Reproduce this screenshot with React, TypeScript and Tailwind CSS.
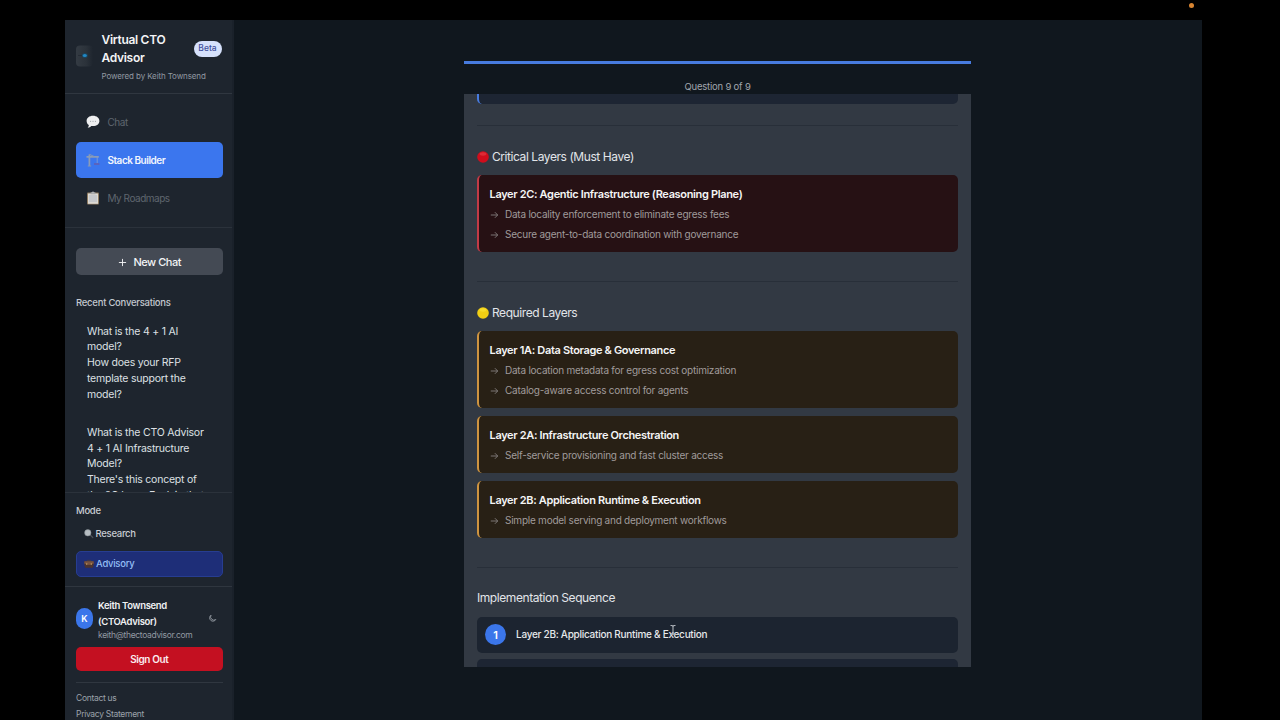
import { ReactNode } from "react";
import { Plus } from "lucide-react";

type Layer = {
  title: string;
  points: string[];
};

const criticalLayers: Layer[] = [
  {
    title: "Layer 2C: Agentic Infrastructure (Reasoning Plane)",
    points: [
      "Data locality enforcement to eliminate egress fees",
      "Secure agent-to-data coordination with governance",
    ],
  },
];

const requiredLayers: Layer[] = [
  {
    title: "Layer 1A: Data Storage & Governance",
    points: [
      "Data location metadata for egress cost optimization",
      "Catalog-aware access control for agents",
    ],
  },
  {
    title: "Layer 2A: Infrastructure Orchestration",
    points: ["Self-service provisioning and fast cluster access"],
  },
  {
    title: "Layer 2B: Application Runtime & Execution",
    points: ["Simple model serving and deployment workflows"],
  },
];

function LogoIcon() {
  return (
    <svg width="17" height="22" viewBox="0 0 17 22" className="mb-[2px] shrink-0">
      <defs>
        <linearGradient id="logo" x1="0" x2="1">
          <stop offset="0" stopColor="#343b43" />
          <stop offset="0.6" stopColor="#2b323a" />
          <stop offset="1" stopColor="#1e252e" />
        </linearGradient>
      </defs>
      <rect width="17" height="21" y="0.500" rx="4" fill="url(#logo)" />
      <path d="M2 10.500h4" stroke="#232a32" strokeWidth="0.8" />
      <ellipse cx="8.800" cy="10.500" rx="2.900" ry="2.300" fill="#1b4761" />
      <ellipse cx="8.800" cy="10.500" rx="2" ry="1.500" fill="#2187c4" />
    </svg>
  );
}

function ChatIcon() {
  return (
    <svg width="14" height="14" viewBox="0 0 14 14">
      <path
        d="M7 .8C3.300 .8 .6 2.900.6 5.900c0 1.900 1 3.300 2.300 4.200-.1 1-.6 1.900-1.200 2.700 1.500-.2 2.700-.9 3.500-1.800.6.1 1.200.1 1.800.1 3.700 0 6.400-2.200 6.400-5.200S10.700 .8 7 .8z"
        fill="#eeeff0"
      />
      <circle cx="4.600" cy="6.300" r=".5" fill="#858b91" />
      <circle cx="7" cy="6.300" r=".5" fill="#858b91" />
      <circle cx="9.400" cy="6.300" r=".5" fill="#858b91" />
    </svg>
  );
}

function CraneIcon() {
  return (
    <svg width="14" height="14" viewBox="0 0 14 14" fill="none">
      <path d="M.5 3.800h12.300M3.400 1.500v11.500" stroke="#8b9cb7" strokeWidth="1.700" />
      <path d="M1.800 13h3.400M3.400 1.300l5 2.300" stroke="#8497b5" />
      <path d="M11.200 4v6" stroke="#7f9cd2" strokeWidth="0.900" />
      <path d="M8 11h5.400" stroke="#6c5aa5" strokeWidth="1.300" />
    </svg>
  );
}

function ClipboardIcon() {
  return (
    <svg width="14" height="14" viewBox="0 0 14 14">
      <rect x="1" y="1.500" width="12" height="12" rx="1" fill="#8d7a60" />
      <rect x="2" y="2.500" width="10" height="10.300" fill="#dcd9d3" />
      <rect x="3" y="4" width="8" height="7" fill="#c6c8cb" />
      <rect x="4.500" y="1.300" width="5" height="2" rx=".6" fill="#a6a8aa" />
      <circle cx="7" cy="1.400" r="1" fill="#b2b4b6" />
    </svg>
  );
}

function SearchIcon() {
  return (
    <svg width="10" height="10" viewBox="0 0 10 10" className="mb-[2px]">
      <path d="M6.300 6l2.500 2.500" stroke="#4a5058" strokeWidth="1.200" strokeLinecap="round" />
      <circle cx="3.800" cy="3.800" r="3.200" fill="#b6bdc2" stroke="#858c92" strokeWidth=".5" />
    </svg>
  );
}

function BriefcaseIcon() {
  return (
    <svg width="10" height="10" viewBox="0 0 10 10">
      <path d="M3.400 2.300V1.300h3.200v1" fill="none" stroke="#4d3c3b" strokeWidth=".8" />
      <path d="M.5 2.300h9l.3 2.500-.9 4H1.100L.2 4.800z" fill="#4b332f" />
      <path d="M.5 2.300h9l.3 2.200L5 6 .2 4.500z" fill="#79543f" />
      <rect x="2.200" y="4.300" width="1.100" height="1.500" fill="#c9a066" />
      <rect x="6.700" y="4.300" width="1.100" height="1.500" fill="#c9a066" />
    </svg>
  );
}

function MoonIcon() {
  return (
    <svg width="9" height="9" viewBox="0 0 9 9" fill="none">
      <path
        d="M3 1.200a3.300 3.300 0 1 0 4.800 4.300A3.300 3.300 0 0 1 3 1.200z"
        stroke="#9298a0"
        strokeWidth="0.900"
        strokeLinejoin="round"
      />
    </svg>
  );
}

function Dot({ color, shine }: { color: string; shine: string }) {
  return (
    <svg width="12" height="12" viewBox="0 0 12 12">
      <circle cx="6" cy="6" r="5.800" fill={color} />
      <ellipse cx="6" cy="3" rx="3.400" ry="1.700" fill={shine} opacity="0.4" />
    </svg>
  );
}

function Arrow() {
  return (
    <svg width="9" height="8" viewBox="0 0 9 8" fill="none" className="mr-[6.500px] shrink-0">
      <path d="M.8 4h6.900M4.900 1.200L7.700 4 4.900 6.800" stroke="#857f7f" strokeWidth="0.900" />
    </svg>
  );
}

function LayerCard({ layer, className }: { layer: Layer; className: string }) {
  return (
    <div className={`rounded-[5px] border-l-[2.500px] pt-[9px] pb-[7.500px] pl-[10.500px] ${className}`}>
      <h4 className="h-[20.500px] text-[11px] leading-[20.500px] font-semibold tracking-[-0.340px] text-[#f5f5f5]">
        {layer.title}
      </h4>
      {layer.points.map((point) => (
        <div
          key={point}
          className="flex h-[20px] items-center text-[10px] tracking-[-0.240px] text-[#a09b9b]"
        >
          <Arrow />
          {point}
        </div>
      ))}
    </div>
  );
}

function SectionTitle({ children }: { children: ReactNode }) {
  return (
    <h3 className="flex h-5 items-center gap-[3px] text-[12px] tracking-[-0.430px] text-[#e2e5e9]">
      {children}
    </h3>
  );
}

function Sidebar() {
  return (
    <aside className="flex h-[700px] w-[169px] shrink-0 flex-col overflow-hidden border-r-2 border-[#1a212a] bg-[#1e252e]">
      {/* BRAND */}
      <div className="flex h-[74px] shrink-0 items-center border-b border-[#303740] pl-[10.500px]">
        <LogoIcon />
        <div className="ml-[9px] w-[92px] pt-[2px] whitespace-nowrap">
          <h1 className="text-[12px] leading-[18px] font-semibold tracking-[-0.300px] text-[#f3f4f6]">
            Virtual CTO
            <br />
            Advisor
          </h1>
          <p className="text-[8px] leading-[18px] tracking-[-0.120px] text-[#9299a2]">
            Powered by Keith Townsend
          </p>
        </div>
        <span className="mb-[16px] flex h-4 w-7 items-center justify-center rounded-full bg-[#d6e1fb] text-[8.500px] font-medium text-[#414f9b]">
          Beta
        </span>
      </div>

      {/* NAV */}
      <nav className="flex h-[134px] shrink-0 flex-col gap-[2px] border-b border-[#2b323b] pt-[10px] pr-[9.500px] pl-[11px] text-[10px] tracking-[-0.480px] text-[#5e656e]">
        <div className="flex h-[36px] shrink-0 items-center gap-[7.500px] pl-[10px]">
          <ChatIcon />
          Chat
        </div>
        <div className="flex h-[36px] shrink-0 items-center gap-[7.500px] rounded-[5px] bg-[#3b76ee] pl-[10px] font-semibold text-[#f1f5fd]">
          <CraneIcon />
          Stack Builder
        </div>
        <div className="flex h-[36px] shrink-0 items-center gap-[7.500px] pl-[10px]">
          <ClipboardIcon />
          My Roadmaps
        </div>
      </nav>

      {/* CONVERSATIONS */}
      <div className="h-[265px] shrink-0 overflow-hidden border-b border-[#2b323b] pt-[20px] pr-[9.500px] pl-[11px]">
        <div className="flex h-[27px] items-center justify-center gap-[5px] rounded-[5px] bg-[#444a54] pt-px text-[11px] font-medium tracking-[-0.450px] text-[#f3f4f6]">
          <Plus size={11} strokeWidth={2} />
          New Chat
        </div>
        <h2 className="mt-[20px] text-[9.500px] leading-4 font-medium tracking-[-0.250px] text-[#c3c8cf]">
          Recent Conversations
        </h2>
        <div className="mt-[12.500px] pl-[11px] text-[10.500px] leading-[15.750px] tracking-[-0.220px] whitespace-nowrap text-[#dde0e4]">
          <p>
            What is the 4 + 1 AI
            <br />
            model?
            <br />
            How does your RFP
            <br />
            template support the
            <br />
            model?
          </p>
          <p className="mt-[22.500px]">
            What is the CTO Advisor
            <br />
            4 + 1 AI Infrastructure
            <br />
            Model?
            <br />
            There's this concept of
            <br />
            the 2C layer. Explain that
          </p>
        </div>
      </div>

      {/* MODE */}
      <div className="h-[94px] shrink-0 border-b border-[#2f363f] pt-[10px] pr-[9.500px] pl-[11px] text-[9.500px] font-medium tracking-[-0.280px] text-[#c9cdd3]">
        <div className="leading-4">Mode</div>
        <div className="mt-[3px] flex h-[25px] items-center gap-[2px] pl-[7.500px]">
          <SearchIcon />
          Research
        </div>
        <div className="mt-[4px] flex h-[25.500px] items-center gap-[2px] rounded-[5px] border border-[#273d91] bg-[#1e2e78] pl-[7px] text-[#93bdf5]">
          <BriefcaseIcon />
          Advisory
        </div>
      </div>

      {/* ACCOUNT */}
      <div className="pt-[11px] pr-[9.500px] pl-[11px]">
        <div className="flex items-center">
          <div className="flex h-[21px] w-[17px] items-center justify-center rounded-full bg-[#3b76ea] text-[9px] font-semibold text-white">
            K
          </div>
          <div className="ml-[5px] w-[110px] whitespace-nowrap">
            <p className="text-[9.500px] leading-[15.750px] font-semibold tracking-[-0.330px] text-[#f0f1f3]">
              Keith Townsend
              <br />
              (CTOAdvisor)
            </p>
            <p className="text-[8.500px] leading-[10px] tracking-[-0.330px] text-[#9299a2]">
              keith@thectoadvisor.com
            </p>
          </div>
          <MoonIcon />
        </div>
        <div className="mt-[7.500px] flex h-[24px] items-center justify-center rounded-[5px] bg-[#c41021] text-[10px] font-semibold tracking-[-0.400px] text-[#faecee]">
          Sign Out
        </div>
        <div className="mt-[10.500px] border-t border-[#303740] pt-[8.500px] text-[8.500px] leading-[15.750px] tracking-[-0.300px] text-[#9ca2aa]">
          <p>Contact us</p>
          <p>Privacy Statement</p>
        </div>
      </div>
    </aside>
  );
}

function Roadmap() {
  return (
    <div className="h-[572.500px] overflow-hidden bg-[#323943] px-[13px]">
      <div className="h-[10px] rounded-b-[5px] border-l-[2.500px] border-[#477bdf] bg-[#1d2533]" />

      <section className="mt-[21px] border-t border-[#282f39] pt-[21px]">
        <SectionTitle>
          <Dot color="#d00d1c" shine="#f05a60" />
          Critical Layers (Must Have)
        </SectionTitle>
        <div className="mt-[8px]">
          {criticalLayers.map((layer) => (
            <LayerCard key={layer.title} layer={layer} className="border-[#c33a46] bg-[#261114]" />
          ))}
        </div>
      </section>

      <section className="mt-[29px] border-t border-[#282f39] pt-[21px]">
        <SectionTitle>
          <Dot color="#f2cf14" shine="#fff04a" />
          Required Layers
        </SectionTitle>
        <div className="mt-[8px] flex flex-col gap-[8px]">
          {requiredLayers.map((layer) => (
            <LayerCard key={layer.title} layer={layer} className="border-[#cf9440] bg-[#282015]" />
          ))}
        </div>
      </section>

      <section className="mt-[28.500px] border-t border-[#282f39] pt-[20.500px]">
        <SectionTitle>Implementation Sequence</SectionTitle>
        <div className="mt-[8.500px] flex h-[36.500px] items-center rounded-[5px] bg-[#1c2430] pl-[8px] text-[10px] font-medium tracking-[-0.270px] text-[#e6e8eb]">
          <span className="mr-[10px] flex size-[21px] items-center justify-center rounded-full bg-[#3b76ea] text-[11px] font-semibold text-white">
            1
          </span>
          Layer 2B: Application Runtime &amp; Execution
        </div>
        <div className="mt-[5.500px] h-[37px] rounded-[5px] bg-[#1d2533]" />
      </section>
    </div>
  );
}

export default function App() {
  return (
    <div className="relative h-[720px] w-[1280px] overflow-hidden bg-black pt-[20px] pl-[65px] font-['Inter',sans-serif]">
      <span className="absolute top-[3px] left-[1188.500px] size-[5px] rounded-full bg-[#d88532]" />

      <div className="flex h-[700px] w-[1136.500px] bg-[#10171e]">
        <Sidebar />
        <main className="ml-[230px] w-[507px] pt-[41px]">
          <div className="h-[3px] bg-[#477bdf]" />
          <p className="h-[30px] pt-[15px] text-center text-[9.500px] leading-4 tracking-[-0.200px] text-[#a1a6ad]">
            Question 9 of 9
          </p>
          <Roadmap />
        </main>
      </div>

      {/* text cursor */}
      <svg
        width="8"
        height="12"
        viewBox="0 0 8 12"
        fill="none"
        className="absolute top-[624px] left-[669px]"
      >
        <path
          d="M1.500 1.500h1.500l1 1 1-1h1.500M4 2.500v7M1.500 10.500h1.500l1-1 1 1h1.500"
          stroke="#aeb3b9"
          strokeWidth="1.100"
        />
      </svg>
    </div>
  );
}
